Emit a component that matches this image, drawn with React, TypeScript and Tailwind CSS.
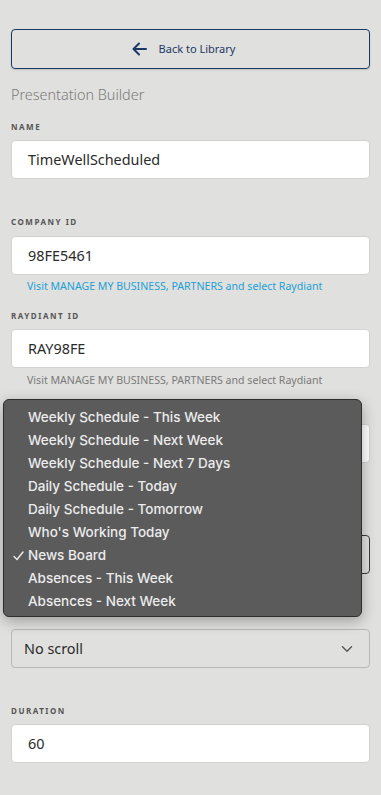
import React from "react";

const Label = ({ children, className = "" }: { children?: React.ReactNode; className?: string }) => (
  <div className={`h-[12px] text-[8px] leading-[12px] font-bold tracking-[0.19em] text-[#555555] uppercase ${className}`}>
    {children}
  </div>
);

const Input = ({ value, className = "" }: { value: string; className?: string }) => (
  <div className={`h-[39px] shrink-0 rounded-[4px] border border-[#d2d2d0] bg-white flex items-center pl-[16px] text-[14.4px] text-[#2b2b2b] ${className}`}>
    {value}
  </div>
);

const items = [
  "Weekly Schedule - This Week",
  "Weekly Schedule - Next Week",
  "Weekly Schedule - Next 7 Days",
  "Daily Schedule - Today",
  "Daily Schedule - Tomorrow",
  "Who's Working Today",
  "News Board",
  "Absences - This Week",
  "Absences - Next Week",
];

export default function App() {
  return (
    <div
      className="relative w-[381px] h-[795px] bg-[#e0e0de] overflow-hidden"
      style={{ fontFamily: "'Noto Sans', Lato, sans-serif" }}
    >
      <div className="px-[11px] pt-[29px] flex flex-col">
        <button className="h-[40px] shrink-0 rounded-[4px] border border-[#1c3866] flex items-center justify-center gap-[12px] pr-[14px] text-[#1c3866] text-[11px] shadow-[0_1px_2px_rgba(0,0,0,0.15)]">
          <svg width="15" height="14" viewBox="0 0 15 14" fill="none" stroke="#1c3866" strokeWidth="2" strokeLinecap="round" strokeLinejoin="round">
            <path d="M14 7H2" />
            <path d="M7 1.5L1.5 7L7 12.5" />
          </svg>
          <span>Back to Library</span>
        </button>
        <div className="mt-[16px] text-[14.4px] leading-[20px] text-[#7b7b7b] font-light">Presentation Builder</div>

        <Label className="mt-[16px]">Name</Label>
        <Input value="TimeWellScheduled" className="mt-[7px]" />

        <Label className="mt-[37px]">Company ID</Label>
        <Input value="98FE5461" className="mt-[8px]" />
        <div className="mt-[4px] pl-[16px] text-[10.6px] leading-[14px] text-[#22a0d6] whitespace-nowrap">
          Visit MANAGE MY BUSINESS, PARTNERS and select Raydiant
        </div>

        <Label className="mt-[17px]">Raydiant ID</Label>
        <Input value="RAY98FE" className="mt-[7px]" />
        <div className="mt-[5px] pl-[16px] text-[10.6px] leading-[14px] text-[#7a7a7a] whitespace-nowrap">
          Visit MANAGE MY BUSINESS, PARTNERS and select Raydiant
        </div>

        <Label className="mt-[19px]" />
        <Input value="" className="mt-[6px]" />

        <Label className="mt-[53px]" />
        <div className="mt-[7px] h-[39px] shrink-0 rounded-[4px] border border-[#3a3a3a] bg-[#e0e0de]" />

        <Label className="mt-[34px]">Scroll Screen</Label>
        <div className="mt-[9px] h-[39px] shrink-0 rounded-[4px] border border-[#b8b8b6] flex items-center justify-between pl-[12px] pr-[16px] text-[14.4px] text-[#2b2b2b]">
          <span>No scroll</span>
          <svg width="12" height="8" viewBox="0 0 12 8" fill="none" stroke="#555" strokeWidth="1.4" strokeLinecap="round" strokeLinejoin="round">
            <path d="M1.5 1.8L6 6.2L10.5 1.8" />
          </svg>
        </div>

        <Label className="mt-[37px]">Duration</Label>
        <Input value="60" className="mt-[7px]" />
      </div>

      <div
        className="absolute left-[3px] top-[399px] w-[359px] h-[218px] rounded-[6px] bg-[#5b5b5c] border border-[#2e2e2e] shadow-[0_4px_14px_rgba(0,0,0,0.3)] pt-[6px]"
        style={{ fontFamily: "Inter, 'Liberation Sans', sans-serif" }}
      >
        {items.map((it) => (
          <div key={it} className="relative h-[23px] flex items-center pl-[24px] text-[13.5px] font-medium text-[#ececec]">
            {it === "News Board" && (
              <svg className="absolute left-[9px] top-[7px]" width="11" height="10" viewBox="0 0 11 10" fill="none" stroke="#ececec" strokeWidth="1.4" strokeLinecap="round" strokeLinejoin="round">
                <path d="M1 5.5L4 8.5L10 1" />
              </svg>
            )}
            {it}
          </div>
        ))}
      </div>
    </div>
  );
}
